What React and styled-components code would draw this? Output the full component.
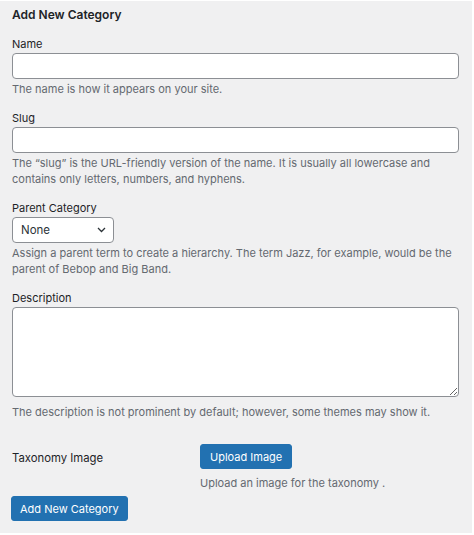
import React from 'react';
import styled, { createGlobalStyle } from 'styled-components';

const GlobalStyle = createGlobalStyle`
  html, body {
    margin: 0;
    padding: 0;
    background: #ffffff;
  }
  body {
    font-family: Inter, "Liberation Sans", Arial, sans-serif;
    color: #1d2327;
  }
`;

const Panel = styled.div`
  background: #f0f0f1;
  margin: 1px 2px 2px 0;
  height: 532px;
  box-sizing: border-box;
  padding: 5px 13px 0 12px;
  display: flex;
  flex-direction: column;
`;

const Title = styled.h2`
  margin: 0 0 12px;
  font-size: 12px;
  font-weight: 600;
  line-height: 18px;
  color: #1d2327;
`;

const Field = styled.div`
  display: flex;
  flex-direction: column;
  margin-bottom: ${p => p.$gap ?? 13}px;
`;

const Label = styled.label`
  font-size: 11px;
  line-height: 16px;
  color: #1d2327;
  margin-bottom: 1px;
`;

const TextInput = styled.input`
  box-sizing: border-box;
  width: 100%;
  height: 26px;
  border: 1px solid #8c8f94;
  border-radius: 4px;
  background: #fff;
  margin: 0;
  padding: 0 8px;
  font: inherit;
`;

const TextArea = styled.textarea`
  box-sizing: border-box;
  width: 100%;
  height: 90px;
  border: 1px solid #8c8f94;
  border-radius: 4px;
  background: #fff;
  margin: 0;
  padding: 6px 8px;
  font: inherit;
  resize: vertical;
  display: block;
`;

const SelectBox = styled.div`
  box-sizing: border-box;
  width: 102px;
  height: 26px;
  border: 1px solid #8c8f94;
  border-radius: 4px;
  background: #fff;
  display: flex;
  align-items: center;
  justify-content: space-between;
  padding: 0 7px 0 8px;
  font-size: 11.5px;
  color: #2c3338;
`;

const Help = styled.p`
  margin: ${p => p.$top || 2}px 0 0;
  font-size: 11px;
  line-height: 16px;
  color: #646970;
`;

const ImageRow = styled.div`
  display: grid;
  grid-template-columns: 188px 1fr;
  row-gap: 6px;
  margin-top: 24px;
`;

const RowLabel = styled.span`
  align-self: center;
  font-size: 11.3px;
  color: #1d2327;
  padding-top: 3px;
`;

const Button = styled.button`
  box-sizing: border-box;
  justify-self: start;
  height: 25px;
  padding: 0 9px;
  border: 1px solid #2271b1;
  border-radius: 3px;
  background: #2271b1;
  color: #fff;
  font-family: inherit;
  font-size: 11px;
  cursor: pointer;
`;

const ImageHelp = styled.span`
  grid-column: 2;
  font-size: 11px;
  line-height: 16px;
  color: #646970;
`;

const Submit = styled(Button)`
  align-self: flex-start;
  margin-top: 5px;
  margin-left: -1px;
  padding: 0 8px;
`;

const Chevron = () => (
  <svg width="9" height="6" viewBox="0 0 9 6">
    <polyline points="1,1 4.5,4.5 8,1" fill="none" stroke="#2c3338" strokeWidth="1.3" />
  </svg>
);

export default function App() {
  return (
    <>
      <GlobalStyle />
      <Panel>
        <Title>Add New Category</Title>

        <Field>
          <Label>Name</Label>
          <TextInput type="text" />
          <Help>The name is how it appears on your site.</Help>
        </Field>

        <Field>
          <Label>Slug</Label>
          <TextInput type="text" />
          <Help>
            The “slug” is the URL-friendly version of the name. It is usually all lowercase and
            contains only letters, numbers, and hyphens.
          </Help>
        </Field>

        <Field>
          <Label>Parent Category</Label>
          <SelectBox>
            <span>None</span>
            <Chevron />
          </SelectBox>
          <Help>
            Assign a parent term to create a hierarchy. The term Jazz, for example, would be the
            parent of Bebop and Big Band.
          </Help>
        </Field>

        <Field $gap={0}>
          <Label>Description</Label>
          <TextArea />
          <Help $top={7}>The description is not prominent by default; however, some themes may show it.</Help>
        </Field>

        <ImageRow>
          <RowLabel>Taxonomy Image</RowLabel>
          <Button type="button">Upload Image</Button>
          <ImageHelp>Upload an image for the taxonomy .</ImageHelp>
        </ImageRow>

        <Submit type="button">Add New Category</Submit>
      </Panel>
    </>
  );
}
